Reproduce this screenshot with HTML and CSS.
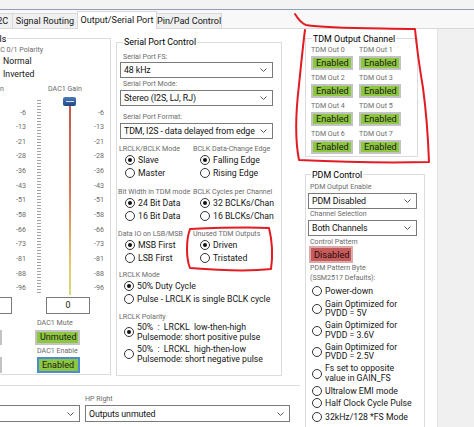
FILE: index.html
```html
<!DOCTYPE html>
<html>
<head>
<meta charset="utf-8">
<link rel="stylesheet" href="styles.css">
</head>
<body>
<div class="window">
  <div class="titlebar"></div>
  <div class="tabstrip">
    <div class="tab t1">I2C</div>
    <div class="tab t2">Signal Routing</div>
    <div class="tab t3 active">Output/Serial Port</div>
    <div class="tab t4">Pin/Pad Control</div>
  </div>
  <div class="pagebody">
    <div class="content">
      <div class="leftmid">
        <div class="upper">
          <div class="group dac">
            <div class="gtitle dac-title">Controls</div>
            <div class="flabel pol-label">DAC 0/1 Polarity</div>
            <div class="radio pol"><span class="dot on"></span>Normal</div>
            <div class="radio pol"><span class="dot"></span>Inverted</div>
            <div class="channels">
              <div class="channel">
                <div class="flabel gain-label">DAC0 Gain</div>
                <div class="slider">
                  <div class="ticks"></div>
                  <div class="track"><div class="thumb"></div><div class="line"></div></div>
                  <div class="scale"><span>-6</span><span>-13</span><span>-21</span><span>-28</span><span>-36</span><span>-43</span><span>-51</span><span>-58</span><span>-66</span><span>-73</span><span>-81</span><span>-88</span><span>-96</span></div>
                </div>
                <div class="numbox">0</div>
                <div class="flabel ch-label mute-label">DAC0 Mute</div>
                <div class="state green mute">Unmuted</div>
                <div class="flabel ch-label enable-label">DAC0 Enable</div>
                <div class="state green enable">Enabled</div>
              </div>
              <div class="channel">
                <div class="flabel gain-label">DAC1 Gain</div>
                <div class="slider">
                  <div class="ticks"></div>
                  <div class="track"><div class="thumb"></div><div class="line"></div></div>
                  <div class="scale"><span>-6</span><span>-13</span><span>-21</span><span>-28</span><span>-36</span><span>-43</span><span>-51</span><span>-58</span><span>-66</span><span>-73</span><span>-81</span><span>-88</span><span>-96</span></div>
                </div>
                <div class="numbox">0</div>
                <div class="flabel ch-label mute-label">DAC1 Mute</div>
                <div class="state green mute">Unmuted</div>
                <div class="flabel ch-label enable-label">DAC1 Enable</div>
                <div class="state green enable focus">Enabled</div>
              </div>
            </div>
          </div>

          <div class="group serial">
            <div class="gtitle serial-title">Serial Port Control</div>
            <div class="flabel sl mt4">Serial Port FS:</div>
            <div class="select ssel mt1"><span>48 kHz</span><svg class="chev" width="7" height="4" viewBox="0 0 7 4"><polyline points="0.5,0.5 3.5,3.5 6.5,0.5"/></svg></div>
            <div class="flabel sl mt1">Serial Port Mode:</div>
            <div class="select ssel mt2"><span>Stereo (I2S, LJ, RJ)</span><svg class="chev" width="7" height="4" viewBox="0 0 7 4"><polyline points="0.5,0.5 3.5,3.5 6.5,0.5"/></svg></div>
            <div class="flabel sl mt6">Serial Port Format:</div>
            <div class="select ssel mt2"><span>TDM, I2S - data delayed from edge</span><svg class="chev" width="7" height="4" viewBox="0 0 7 4"><polyline points="0.5,0.5 3.5,3.5 6.5,0.5"/></svg></div>

            <div class="rgrid mt5">
              <div class="rcol">
                <div class="flabel gl">LRCLK/BCLK Mode</div>
                <div class="radio"><span class="dot on"></span>Slave</div>
                <div class="radio"><span class="dot"></span>Master</div>
              </div>
              <div class="rcol">
                <div class="flabel gl2">BCLK Data-Change Edge</div>
                <div class="radio"><span class="dot on"></span>Falling Edge</div>
                <div class="radio"><span class="dot"></span>Rising Edge</div>
              </div>
            </div>
            <div class="rgrid mt8">
              <div class="rcol">
                <div class="flabel">Bit Width in TDM mode</div>
                <div class="radio"><span class="dot on"></span>24 Bit Data</div>
                <div class="radio"><span class="dot"></span>16 Bit Data</div>
              </div>
              <div class="rcol">
                <div class="flabel gl2">BCLK Cycles per Channel</div>
                <div class="radio"><span class="dot on"></span>32 BCLKs/Chan</div>
                <div class="radio"><span class="dot"></span>16 BLCKs/Chan</div>
              </div>
            </div>
            <div class="rgrid mt7">
              <div class="rcol">
                <div class="flabel">Data IO on LSB/MSB</div>
                <div class="radio"><span class="dot on"></span>MSB First</div>
                <div class="radio"><span class="dot"></span>LSB First</div>
              </div>
              <div class="rcol">
                <div class="flabel gl2">Unused TDM Outputs</div>
                <div class="radio"><span class="dot on"></span>Driven</div>
                <div class="radio"><span class="dot"></span>Tristated</div>
              </div>
            </div>
            <div class="flabel gl mt6">LRCLK Mode</div>
            <div class="radio single"><span class="dot on"></span>50% Duty Cycle</div>
            <div class="radio single"><span class="dot"></span>Pulse - LRCLK is single BCLK cycle</div>
            <div class="flabel gl mt7">LRCLK Polarity</div>
            <div class="radio single multi mt1"><span class="dot on"></span><span>50%&nbsp; :&nbsp; LRCKL&nbsp; low-then-high<br>Pulsemode: short positive pulse</span></div>
            <div class="radio single multi mt2"><span class="dot"></span><span>50%&nbsp; :&nbsp; LRCKL&nbsp; high-then-low<br>Pulsemode: short negative pulse</span></div>
          </div>
        </div>

        <div class="bottom">
          <div class="bfield bleft">
            <div class="flabel">HP Left</div>
            <div class="select"><span>Outputs unmuted</span><svg class="chev" width="7" height="4" viewBox="0 0 7 4"><polyline points="0.5,0.5 3.5,3.5 6.5,0.5"/></svg></div>
          </div>
          <div class="bfield bright">
            <div class="flabel">HP Right</div>
            <div class="select"><span>Outputs unmuted</span><svg class="chev" width="7" height="4" viewBox="0 0 7 4"><polyline points="0.5,0.5 3.5,3.5 6.5,0.5"/></svg></div>
          </div>
        </div>
      </div>

      <div class="rightcol">
        <div class="group tdm">
          <div class="gtitle tdm-title">TDM Output Channel</div>
          <div class="tdm-grid">
            <div class="tcell"><div class="flabel">TDM Out 0</div><div class="state green tbox">Enabled</div></div>
            <div class="tcell"><div class="flabel">TDM Out 1</div><div class="state green tbox">Enabled</div></div>
            <div class="tcell"><div class="flabel">TDM Out 2</div><div class="state green tbox">Enabled</div></div>
            <div class="tcell"><div class="flabel">TDM Out 3</div><div class="state green tbox">Enabled</div></div>
            <div class="tcell"><div class="flabel">TDM Out 4</div><div class="state green tbox">Enabled</div></div>
            <div class="tcell"><div class="flabel">TDM Out 5</div><div class="state green tbox">Enabled</div></div>
            <div class="tcell"><div class="flabel">TDM Out 6</div><div class="state green tbox">Enabled</div></div>
            <div class="tcell"><div class="flabel">TDM Out 7</div><div class="state green tbox">Enabled</div></div>
          </div>
        </div>

        <div class="group pdm">
          <div class="gtitle pdm-title">PDM Control</div>
          <div class="flabel pl">PDM Output Enable</div>
          <div class="select psel mt2"><span>PDM Disabled</span><svg class="chev" width="7" height="4" viewBox="0 0 7 4"><polyline points="0.5,0.5 3.5,3.5 6.5,0.5"/></svg></div>
          <div class="flabel pl mt2">Channel Selection</div>
          <div class="select psel mt2"><span>Both Channels</span><svg class="chev" width="7" height="4" viewBox="0 0 7 4"><polyline points="0.5,0.5 3.5,3.5 6.5,0.5"/></svg></div>
          <div class="flabel pl mt2">Control Pattern</div>
          <div class="state red pbox">Disabled</div>
          <div class="flabel pl two mt1">PDM Pattern Byte<br>(SSM2517 Defaults):</div>
          <div class="radio prad mt2"><span class="dot"></span>Power-down</div>
          <div class="radio prad multi pm"><span class="dot"></span><span>Gain Optimized for<br>PVDD = 5V</span></div>
          <div class="radio prad multi pm"><span class="dot"></span><span>Gain Optimized for<br>PVDD = 3.6V</span></div>
          <div class="radio prad multi pm"><span class="dot"></span><span>Gain Optimized for<br>PVDD = 2.5V</span></div>
          <div class="radio prad multi pm"><span class="dot"></span><span>Fs set to opposite<br>value in GAIN_FS</span></div>
          <div class="radio prad mt2"><span class="dot"></span>Ultralow EMI mode</div>
          <div class="radio prad"><span class="dot"></span>Half Clock Cycle Pulse</div>
          <div class="radio prad mt2"><span class="dot"></span>32kHz/128 *FS Mode</div>
        </div>
      </div>
    </div>
    <div class="side"></div>
  </div>

  <svg class="annot" width="474" height="427" viewBox="0 0 474 427">
    <path d="M295,14 C298,19 301,23 306,25 C330,29 380,28 415,29 C417,50 420,70 423,88 C426,110 428,135 429,162 C390,163 340,162 299,160 C295,140 296,110 299,85 C301,65 303,45 305,30"/>
    <path d="M190,229 C215,228 245,227 269,228 C272,240 273,255 271,269 C245,272 215,270 190,268 C186,258 186,240 190,229 Z"/>
  </svg>
</div>
</body>
</html>
```

FILE: styles.css
```css
* { box-sizing: border-box; }

body {
  margin: 0;
  font-family: Roboto, "Liberation Sans", Arial, sans-serif;
  font-size: 8.7px;
  color: #161616;
}

.window {
  position: relative;
  width: 474px;
  height: 427px;
  overflow: hidden;
  background: #f0f0f0;
}

.titlebar {
  height: 10px;
  background: #f3f3f3;
  border-bottom: 1px solid #8e9fbb;
}

.tabstrip {
  height: 19px;
  display: flex;
  align-items: flex-end;
  background: #f8f8f8;
  border-bottom: 1px solid #d9d9d9;
}

.tab {
  height: 15px;
  line-height: 14px;
  font-size: 9.1px;
  border: 1px solid #d9d9d9;
  border-bottom: 0;
  background: #f0f0f0;
  text-align: center;
  margin-right: -1px;
  white-space: nowrap;
  flex-shrink: 0;
}
.t1 { width: 23px; margin-left: -10px; }
.t2 { width: 66px; }
.t3 { width: 80px; }
.t4 { width: 66px; }
.tab.active {
  height: 18px;
  line-height: 17px;
  background: #fff;
  margin-bottom: -1px;
  position: relative;
}

.pagebody { display: flex; height: 398px; }
.content { width: 437px; flex-shrink: 0; background: #fff; display: flex; }
.side { flex: 1; background: #f0f0f0; border-left: 1px solid #e2e2e2; }

.leftmid { width: 300px; flex-shrink: 0; display: flex; flex-direction: column; }
.upper { display: flex; align-items: flex-start; height: 347px; flex-shrink: 0; }

.group {
  border: 1px solid #dcdcdc;
  display: flex;
  flex-direction: column;
  align-items: flex-start;
  flex-shrink: 0;
}
.gtitle {
  height: 12px;
  line-height: 12px;
  margin-top: -7px;
  padding: 0 1px;
  background: #fff;
  font-size: 8.9px;
  color: #000;
  white-space: nowrap;
}

.flabel {
  height: 9px;
  line-height: 9px;
  font-size: 7.1px;
  color: #6b6b6b;
  white-space: nowrap;
}

.mt1 { margin-top: 1px; }
.mt2 { margin-top: 2px; }
.mt4 { margin-top: 4px; }
.mt5 { margin-top: 5px; }
.mt6 { margin-top: 6px; }
.mt7 { margin-top: 7px; }
.mt8 { margin-top: 8px; }

/* radios */
.radio {
  display: flex;
  align-items: center;
  gap: 3px;
  height: 13px;
  white-space: nowrap;
}
.dot {
  width: 10px;
  height: 10px;
  flex-shrink: 0;
  border: 1px solid #333;
  border-radius: 50%;
  background: #fff;
  display: flex;
  align-items: center;
  justify-content: center;
}
.dot.on::after {
  content: "";
  width: 4px;
  height: 4px;
  border-radius: 50%;
  background: #111;
}
.radio.multi { height: auto; line-height: 10px; }

/* selects */
.select {
  height: 16px;
  border: 1px solid #7a7a7a;
  background: #fff;
  display: flex;
  align-items: center;
  justify-content: space-between;
  padding: 0 5px 0 3px;
  white-space: nowrap;
  color: #111;
  font-size: 8.8px;
  letter-spacing: -0.1px;
}
.chev { flex-shrink: 0; }
.chev polyline { fill: none; stroke: #555; stroke-width: 1; }

/* state boxes */
.state {
  height: 15px;
  line-height: 11px;
  padding-left: 3px;
  border: 2px solid #c3c3c3;
  font-size: 9px;
  color: #1a1a1a;
  white-space: nowrap;
}
.green { background: #8dc63f; }
.red { background: #c65b5b; border-color: #dcaaaa; color: #2a0a0a; }

/* DAC group */
.dac {
  margin-left: -56px;
  margin-top: 9px;
  width: 167px;
  height: 337px;
  padding: 0 3px 0 7px;
}
.dac-title { margin-left: 20px; margin-top: -6px; }
.pol-label { margin-left: 39px; }
.pol { margin-left: 38px; }
.channels { display: flex; margin-top: 4px; }
.channel { width: 78px; display: flex; flex-direction: column; align-items: flex-start; }
.gain-label { margin-left: 18px; }
.slider { display: flex; height: 200px; margin-top: 3.5px; }
.ticks {
  margin-left: 7px;
  margin-top: 3px;
  width: 4px;
  height: 193px;
  background: repeating-linear-gradient(to bottom, #a3a3a3 0 1px, transparent 1px 3px);
}
.track {
  margin-left: 22px;
  width: 13px;
  display: flex;
  flex-direction: column;
  align-items: center;
}
.thumb {
  width: 13px;
  height: 9px;
  border-radius: 2px;
  background: linear-gradient(#4c7bbb, #1f4682);
  display: flex;
  align-items: center;
  justify-content: center;
}
.thumb::after { content: ""; width: 8px; height: 1px; background: #d5e0f0; }
.line {
  width: 2px;
  flex: 1;
  margin-bottom: 2px;
  background: linear-gradient(#c9574a, #d9785a 45%, #e6c46a 80%, #d5dd7a);
}
.scale {
  width: 28px;
  display: flex;
  flex-direction: column;
  justify-content: space-between;
  padding: 11px 0 3px;
  text-align: right;
  font-size: 7.1px;
  line-height: 10px;
  color: #6b6b6b;
}
.numbox {
  margin-left: 16px;
  width: 44px;
  height: 17px;
  border: 1px solid #7a7a7a;
  text-align: center;
  line-height: 15px;
  font-size: 8.9px;
}
.ch-label { margin-left: 7px; }
.mute-label { margin-top: 4.5px; }
.enable-label { margin-top: 1.5px; }
.mute { margin-left: 5px; width: 45px; margin-top: 2.5px; }
.enable { margin-left: 7px; width: 43px; height: 16px; line-height: 12px; margin-top: 1.5px; }
.enable.focus { border-color: #4c8bd6; }

/* Serial group */
.serial {
  margin-left: 5px;
  margin-top: 13px;
  width: 166px;
  height: 334px;
  padding-left: 1px;
}
.serial-title { margin-left: 5px; }
.sl { margin-left: 5px; }
.ssel { margin-left: 2px; width: 153px; }
.rgrid { display: grid; grid-template-columns: 75px 90px; }
.rcol { display: flex; flex-direction: column; }
.rcol .radio { padding-left: 7px; }
.gl { margin-left: 1px; }
.radio.single { padding-left: 6px; }

/* Bottom */
.bottom {
  margin-top: 9px;
  margin-left: -100px;
  width: 400px;
  border-top: 1px solid #dcdcdc;
  display: flex;
  gap: 5px;
  flex-shrink: 0;
}
.bfield { display: flex; flex-direction: column; }
.bleft { width: 180px; }
.bright { width: 205px; }
.bfield .flabel { margin-top: 8px; }
.bfield .select { margin-top: 2px; height: 17px; }

/* Right column */
.rightcol { margin-left: 5px; width: 125px; display: flex; flex-direction: column; }
.tdm {
  margin-top: 9px;
  width: 113px;
  height: 119px;
  padding-left: 5px;
}
.tdm-title { margin-left: 1px; margin-top: -6px; }
.tdm-grid { display: grid; grid-template-columns: 48px 48px; row-gap: 3px; }
.tcell { display: flex; flex-direction: column; align-items: flex-start; }
.tbox { margin-top: 2px; width: 42px; height: 14px; line-height: 10px; font-size: 9.2px; }

.pdm {
  margin-top: 17px;
  width: 120px;
  height: 270px;
  padding-left: 2px;
}
.pdm-title { margin-left: 3px; margin-top: -6px; }
.pl { margin-left: 2px; margin-top: 0.5px; }
.psel { width: 109px; }
.pbox { margin-left: 1px; width: 44px; height: 17px; line-height: 13px; font-size: 9.2px; }
.two { height: 20px; line-height: 10px; }
.prad { padding-left: 4px; height: 12px; }
.prad.multi { height: auto; line-height: 9.5px; }
.pm { margin-top: 2.5px; }

/* Hand-drawn annotations */
.annot { position: absolute; left: 0; top: 0; pointer-events: none; }
.annot path { fill: none; stroke: #e31b23; stroke-width: 2; stroke-linecap: round; stroke-linejoin: round; }
```
